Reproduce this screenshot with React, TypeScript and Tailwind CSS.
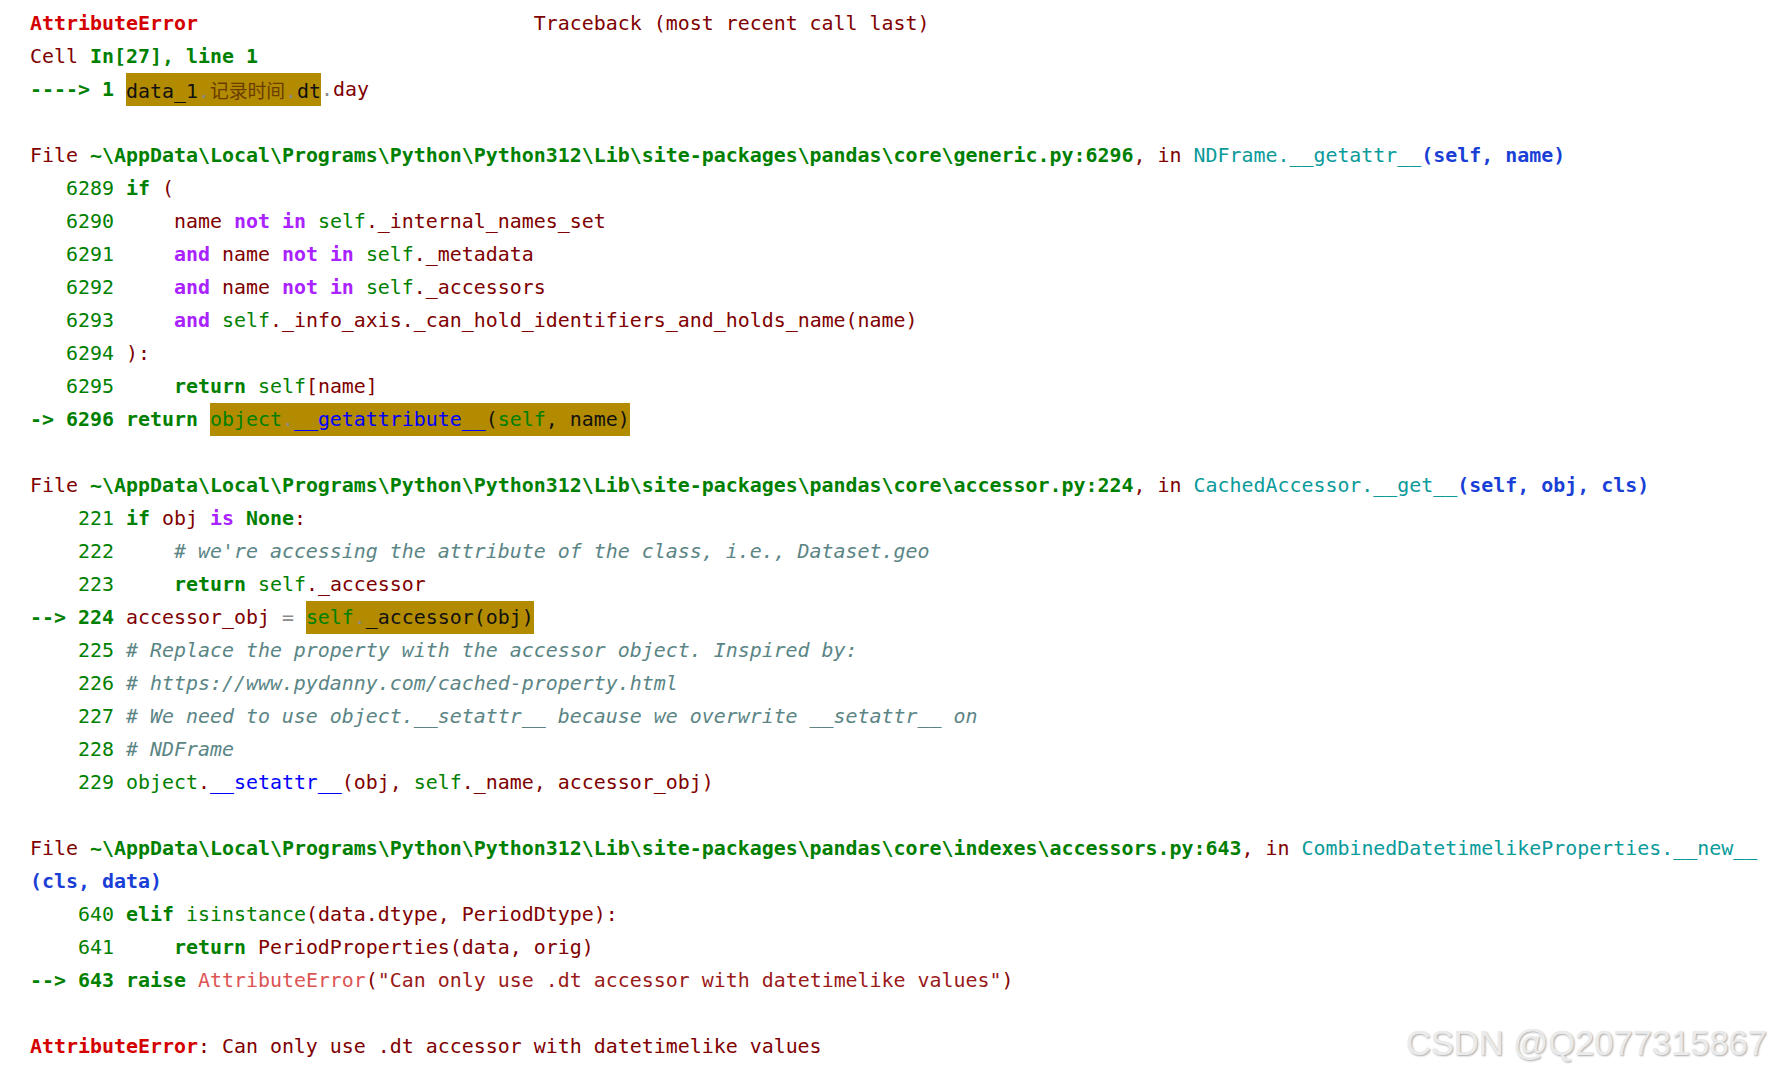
import React from "react";

type Span = [string, string];
type Piece = Span | { hl: Span[] };

// token colours, roughly pygments default + ansi traceback
const C = {
  er: "text-[#d40000] font-bold",
  mr: "text-[#7f0000]",
  g: "text-[#008000]",
  gb: "text-[#008000] font-bold",
  tl: "text-[#0a9a9a]",
  bb: "text-[#1a3fd6] font-bold",
  pp: "text-[#aa22ff] font-bold",
  bl: "text-[#0000ff]",
  cm: "text-[#5b8585] italic",
  gy: "text-[#8a8a8a]",
  bk: "text-[#111111]",
  lr: "text-[#dc5555]",
  st: "text-[#9a1a1a]",
  cjk: "text-[#6a3c00] text-[18.8px] font-['Noto_Sans_CJK_SC',sans-serif]",
};

const base = "~\\AppData\\Local\\Programs\\Python\\Python312\\Lib\\site-packages\\pandas\\core\\";

const lines: Piece[][] = [
  [["AttributeError", C.er], ["                            Traceback (most recent call last)", C.mr]],
  [["Cell ", C.mr], ["In[27], line 1", C.gb]],
  [
    ["----> 1 ", C.gb],
    { hl: [["data_1", C.bk], [".", C.gy], ["记录时间", C.cjk], [".", C.gy], ["dt", C.bk]] },
    [".", C.gy],
    ["day", C.mr],
  ],
  [],
  [["File ", C.mr], [base + "generic.py:6296", C.gb], [", in ", C.mr], ["NDFrame.__getattr__", C.tl], ["(self, name)", C.bb]],
  [["   6289 ", C.g], ["if", C.gb], [" (", C.mr]],
  [["   6290 ", C.g], ["    name ", C.mr], ["not", C.pp], [" ", C.mr], ["in", C.pp], [" ", C.mr], ["self", C.g], ["._internal_names_set", C.mr]],
  [["   6291 ", C.g], ["    ", C.mr], ["and", C.pp], [" name ", C.mr], ["not", C.pp], [" ", C.mr], ["in", C.pp], [" ", C.mr], ["self", C.g], ["._metadata", C.mr]],
  [["   6292 ", C.g], ["    ", C.mr], ["and", C.pp], [" name ", C.mr], ["not", C.pp], [" ", C.mr], ["in", C.pp], [" ", C.mr], ["self", C.g], ["._accessors", C.mr]],
  [["   6293 ", C.g], ["    ", C.mr], ["and", C.pp], [" ", C.mr], ["self", C.g], ["._info_axis._can_hold_identifiers_and_holds_name(name)", C.mr]],
  [["   6294 ", C.g], ["):", C.mr]],
  [["   6295 ", C.g], ["    ", C.mr], ["return", C.gb], [" ", C.mr], ["self", C.g], ["[name]", C.mr]],
  [
    ["-> 6296 ", C.gb],
    ["return", C.gb],
    [" ", C.mr],
    { hl: [["object", C.g], [".", C.gy], ["__getattribute__", C.bl], ["(", C.bk], ["self", C.g], [", name)", C.bk]] },
  ],
  [],
  [["File ", C.mr], [base + "accessor.py:224", C.gb], [", in ", C.mr], ["CachedAccessor.__get__", C.tl], ["(self, obj, cls)", C.bb]],
  [["    221 ", C.g], ["if", C.gb], [" obj ", C.mr], ["is", C.pp], [" ", C.mr], ["None", C.gb], [":", C.mr]],
  [["    222 ", C.g], ["    ", C.mr], ["# we're accessing the attribute of the class, i.e., Dataset.geo", C.cm]],
  [["    223 ", C.g], ["    ", C.mr], ["return", C.gb], [" ", C.mr], ["self", C.g], ["._accessor", C.mr]],
  [
    ["--> 224 ", C.gb],
    ["accessor_obj", C.mr],
    [" = ", C.gy],
    { hl: [["self", C.g], [".", C.gy], ["_accessor(obj)", C.bk]] },
  ],
  [["    225 ", C.g], ["# Replace the property with the accessor object. Inspired by:", C.cm]],
  [["    226 ", C.g], ["# https://www.pydanny.com/cached-property.html", C.cm]],
  [["    227 ", C.g], ["# We need to use object.__setattr__ because we overwrite __setattr__ on", C.cm]],
  [["    228 ", C.g], ["# NDFrame", C.cm]],
  [["    229 ", C.g], ["object", C.g], [".", C.mr], ["__setattr__", C.bl], ["(obj, ", C.mr], ["self", C.g], ["._name, accessor_obj)", C.mr]],
  [],
  [["File ", C.mr], [base + "indexes\\accessors.py:643", C.gb], [", in ", C.mr], ["CombinedDatetimelikeProperties.__new__", C.tl]],
  [["(cls, data)", C.bb]],
  [["    640 ", C.g], ["elif", C.gb], [" ", C.mr], ["isinstance", C.g], ["(data.dtype, PeriodDtype):", C.mr]],
  [["    641 ", C.g], ["    ", C.mr], ["return", C.gb], [" PeriodProperties(data, orig)", C.mr]],
  [
    ["--> 643 ", C.gb],
    ["raise", C.gb],
    [" ", C.mr],
    ["AttributeError", C.lr],
    ["(", C.mr],
    ['"Can only use .dt accessor with datetimelike values"', C.st],
    [")", C.mr],
  ],
  [],
  [["AttributeError", C.er], [": Can only use .dt accessor with datetimelike values", C.mr]],
];

function Line({ pieces }: { pieces: Piece[] }) {
  return (
    <div className="h-[33px] leading-[33px] whitespace-pre">
      {pieces.map((p, i) =>
        Array.isArray(p) ? (
          <span key={i} className={p[1]}>
            {p[0]}
          </span>
        ) : (
          <span key={i} className="inline-block h-[33px] leading-[33px] bg-[#b38b00] align-top">
            {p.hl.map((s, j) => (
              <span key={j} className={s[1]}>
                {s[0]}
              </span>
            ))}
          </span>
        )
      )}
    </div>
  );
}

export default function App() {
  return (
    <div className="relative h-[1074px] w-[1774px] overflow-hidden bg-white">
      <div className="pl-[30px] pt-[7px] font-['DejaVu_Sans_Mono',monospace] text-[19.93px]">
        {lines.map((l, i) => (
          <Line key={i} pieces={l} />
        ))}
      </div>

      {/* CSDN watermark */}
      <div className="absolute right-[7px] bottom-[14px] font-['Liberation_Sans',Arial,sans-serif] text-[34.5px] leading-none text-[#ebebeb] [text-shadow:1px_1px_2px_rgba(0,0,0,0.35)]">
        CSDN @Q2077315867
      </div>
    </div>
  );
}
